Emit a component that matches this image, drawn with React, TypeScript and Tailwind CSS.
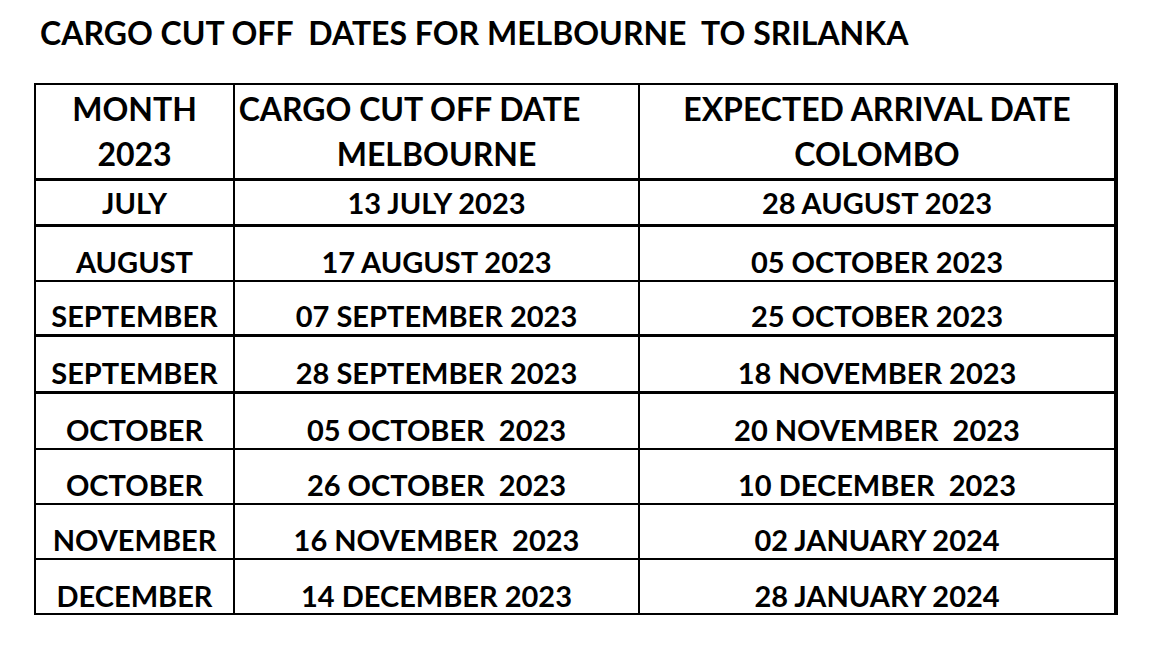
const rows: { month: string; cutoff: string; arrival: string; h: string; pb: string }[] = [
  { month: 'JULY', cutoff: '13 JULY 2023', arrival: '28 AUGUST 2023', h: 'h-[49px] border-y-[3px]', pb: 'pb-[7px]' },
  { month: 'AUGUST', cutoff: '17 AUGUST 2023', arrival: '05 OCTOBER 2023', h: 'h-[55px] border-b-2', pb: 'pb-[4px]' },
  { month: 'SEPTEMBER', cutoff: '07 SEPTEMBER 2023', arrival: '25 OCTOBER 2023', h: 'h-[55px] border-b-[3px]', pb: 'pb-[4px]' },
  { month: 'SEPTEMBER', cutoff: '28 SEPTEMBER 2023', arrival: '18 NOVEMBER 2023', h: 'h-[57px] border-b-[3px]', pb: 'pb-[4px]' },
  { month: 'OCTOBER', cutoff: '05 OCTOBER  2023', arrival: '20 NOVEMBER  2023', h: 'h-[56px] border-b-2', pb: 'pb-[4px]' },
  { month: 'OCTOBER', cutoff: '26 OCTOBER  2023', arrival: '10 DECEMBER  2023', h: 'h-[55px] border-b-2', pb: 'pb-[4px]' },
  { month: 'NOVEMBER', cutoff: '16 NOVEMBER  2023', arrival: '02 JANUARY 2024', h: 'h-[55px] border-b-2', pb: 'pb-[4px]' },
  { month: 'DECEMBER', cutoff: '14 DECEMBER 2023', arrival: '28 JANUARY 2024', h: 'h-[53px]', pb: 'pb-[3px]' },
];

export default function App() {
  return (
    <div className="w-[1150px] h-[653px] bg-white text-black font-bold font-['Lato','Liberation_Sans',sans-serif] overflow-hidden">
      {/* Title */}
      <h1 className="pl-[40px] pt-[16px] text-[32px] leading-[34px] whitespace-pre">
        CARGO CUT OFF  DATES FOR MELBOURNE  TO SRILANKA
      </h1>

      {/* Table */}
      <div className="ml-[34px] mt-[33px] w-[1084px] border-2 border-r-4 border-black">
        {/* Header */}
        <div className="grid grid-cols-[199px_405px_1fr] h-[93px] text-[32px] leading-[45px] text-center">
          <div className="border-r-2 border-black pt-[1px]">
            MONTH
            <br />
            2023
          </div>
          <div className="border-r-2 border-black pt-[1px] whitespace-nowrap">
            <div className="pr-[54px]">CARGO CUT OFF DATE</div>
            <div>MELBOURNE</div>
          </div>
          <div className="pt-[1px]">
            EXPECTED ARRIVAL DATE
            <br />
            COLOMBO
          </div>
        </div>

        {/* Body rows */}
        {rows.map((r, i) => (
          <div
            key={i}
            className={`grid grid-cols-[199px_405px_1fr] border-black text-[29px] leading-none text-center whitespace-pre ${r.h}`}
          >
            <div className={`border-r-2 border-black flex items-end justify-center ${r.pb}`}>{r.month}</div>
            <div className={`border-r-2 border-black flex items-end justify-center ${r.pb}`}>{r.cutoff}</div>
            <div className={`flex items-end justify-center ${r.pb}`}>{r.arrival}</div>
          </div>
        ))}
      </div>
    </div>
  );
}
